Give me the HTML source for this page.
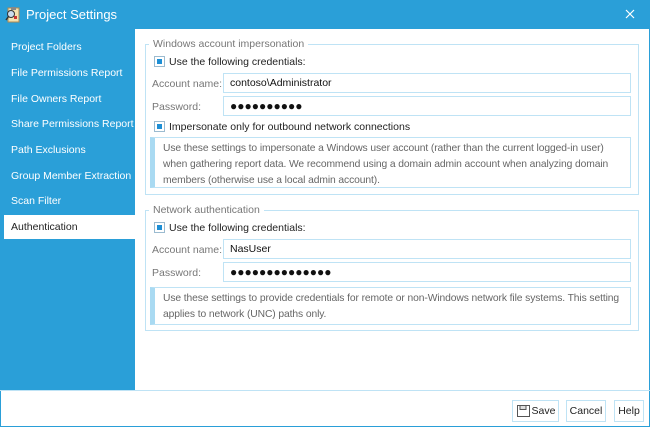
<!DOCTYPE html>
<html><head><style>
*{margin:0;padding:0;box-sizing:border-box}
body{width:650px;height:427px;background:#fff;font-family:"Liberation Sans",sans-serif;font-size:10.5px;color:#222;position:relative;overflow:hidden;white-space:nowrap}
.abs{position:absolute}
#win{position:absolute;left:0;top:0;width:650px;height:427px;border:1px solid #2a9fd8}
#title{left:0;top:0;width:650px;height:29px;background:#2a9fd8;color:#fff;font-size:13px}
#side{left:0;top:29px;width:135px;height:362px;background:#2a9fd8}
.si{position:absolute;left:11px;color:#fff;font-size:10.5px}
.sel{position:absolute;left:4px;top:186px;width:131px;height:24px;background:#fff}
fieldset{position:absolute;border:1px solid #bfe3f5}
.leg{position:absolute;background:#fff;color:#777;padding:0 4px}
.cb{position:absolute;width:11px;height:11px;border:1px solid #9bbbd0;background:#fff}
.cb::after{content:"";position:absolute;left:2px;top:2px;width:5px;height:5px;background:#1e8fd5}
.lbl{position:absolute;color:#777}
.inp{position:absolute;left:223px;width:408px;height:20px;border:1px solid #bfe3f5;padding:3px 0 0 6px;color:#111}
.pw{font-size:12px;padding-top:2px}
.info{position:absolute;left:150px;width:481px;border:1px solid #bfe3f5;border-left:5px solid #a9daf2;color:#666;padding:3px 8px;line-height:16px;white-space:normal;font-size:10.3px;letter-spacing:-0.1px}
.btn{position:absolute;top:400px;height:22px;border:1px solid #bfe3f5;text-align:center;padding-top:4px}
</style></head><body>
<div id="win"></div>
<div id="title" class="abs">
<svg class="abs" style="left:5px;top:6px" width="16" height="17" viewBox="0 0 16 17"><rect x="3" y="2" width="11" height="14" fill="#f4e2b0" stroke="#b08850"/><rect x="6" y="1" width="5" height="3" fill="#888"/><circle cx="6" cy="8" r="3.5" fill="#cde" stroke="#333"/><line x1="3.5" y1="10.5" x2="1" y2="14" stroke="#333" stroke-width="1.5"/><rect x="9" y="10" width="3" height="3" fill="#c33"/></svg>
<div class="abs" style="left:26px;top:7px">Project Settings</div>
<svg class="abs" style="left:625px;top:9px" width="10" height="10" viewBox="0 0 10 10"><path d="M1 1L9 9M9 1L1 9" stroke="#fff" stroke-width="1.2"/></svg>
</div>
<div id="side" class="abs">
<div class="sel"></div>
<div class="si" style="top:12px">Project Folders</div>
<div class="si" style="top:38px">File Permissions Report</div>
<div class="si" style="top:64px">File Owners Report</div>
<div class="si" style="top:89px">Share Permissions Report</div>
<div class="si" style="top:115px">Path Exclusions</div>
<div class="si" style="top:141px">Group Member Extraction</div>
<div class="si" style="top:166px">Scan Filter</div>
<div class="si" style="top:192px;color:#222">Authentication</div>
</div>

<fieldset style="left:145px;top:44px;width:494px;height:151px"></fieldset>
<div class="leg" style="left:149px;top:38px">Windows account impersonation</div>
<div class="cb" style="left:154px;top:56px"></div>
<div class="abs" style="left:169px;top:56px">Use the following credentials:</div>
<div class="lbl" style="left:152px;top:78px">Account name:</div>
<div class="inp" style="top:73px">contoso\Administrator</div>
<div class="lbl" style="left:152px;top:101px">Password:</div>
<div class="inp pw" style="top:96px">●●●●●●●●●●</div>
<div class="cb" style="left:154px;top:121px"></div>
<div class="abs" style="left:169px;top:121px">Impersonate only for outbound network connections</div>
<div class="info" style="top:137px;height:51px">Use these settings to impersonate a Windows user account (rather than the current logged-in user) when gathering report data. We recommend using a domain admin account when analyzing domain members (otherwise use a local admin account).</div>

<fieldset style="left:145px;top:210px;width:494px;height:121px"></fieldset>
<div class="leg" style="left:149px;top:204px">Network authentication</div>
<div class="cb" style="left:154px;top:222px"></div>
<div class="abs" style="left:169px;top:222px">Use the following credentials:</div>
<div class="lbl" style="left:152px;top:244px">Account name:</div>
<div class="inp" style="top:239px">NasUser</div>
<div class="lbl" style="left:152px;top:267px">Password:</div>
<div class="inp pw" style="top:262px">●●●●●●●●●●●●●●</div>
<div class="info" style="top:287px;height:38px">Use these settings to provide credentials for remote or non-Windows network file systems. This setting applies to network (UNC) paths only.</div>

<div class="abs" style="left:0;top:390px;width:650px;height:1px;background:#bfe3f5"></div>
<div class="btn" style="left:512px;width:47px">
<svg class="abs" style="left:4px;top:4px" width="13" height="12" viewBox="0 0 13 12"><rect x="0.5" y="0.5" width="12" height="11" fill="#fff" stroke="#555"/><rect x="3" y="0.5" width="6" height="4" fill="#ddd" stroke="#555"/></svg>
<span style="padding-left:16px">Save</span></div>
<div class="btn" style="left:566px;width:40px">Cancel</div>
<div class="btn" style="left:614px;width:30px">Help</div>
</body></html>
